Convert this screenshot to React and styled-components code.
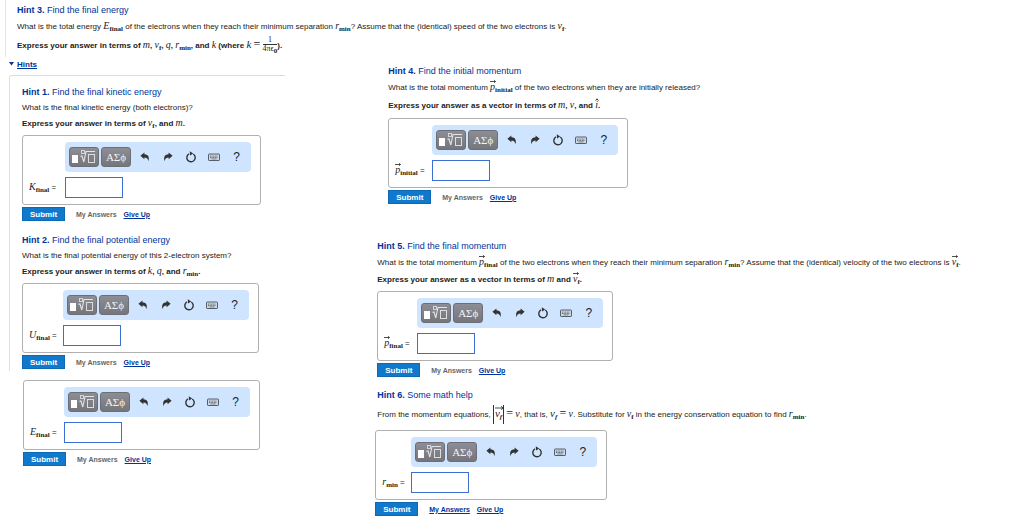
import React from "react";
import styled, { createGlobalStyle } from "styled-components";

const Undo = () => (
  <svg width="10" height="10" viewBox="0 0 10 10">
    <path d="M0.4 3.8 L4.4 0.4 V2.3 C7.8 2.4 9.8 4.6 8.4 9.2 C8 6.8 6.8 5.7 4.4 5.6 V7.2 Z" fill="#333" />
  </svg>
);

const Redo = () => (
  <svg width="10" height="10" viewBox="0 0 10 10">
    <path d="M9.6 3.8 L5.6 0.4 V2.3 C2.2 2.4 0.2 4.6 1.6 9.2 C2 6.8 3.2 5.7 5.6 5.6 V7.2 Z" fill="#333" />
  </svg>
);

const Reset = () => (
  <svg width="12" height="12" viewBox="0 0 12 12">
    <path d="M8.2 3 A4.2 4.2 0 1 1 4 2.9" fill="none" stroke="#333" strokeWidth="1.4" />
    <path d="M4.8 0.3 L8.2 2.4 L5 4.6 Z" fill="#333" />
  </svg>
);

const Keyboard = () => (
  <svg width="12" height="8" viewBox="0 0 12 8">
    <rect x="0.5" y="1" width="11" height="6.5" rx="0.6" fill="#cfd8e2" stroke="#555f6b" />
    <path d="M2 3.1h8M2 4.5h8" stroke="#555f6b" strokeWidth="0.9" strokeDasharray="1 0.6" />
    <path d="M3.4 5.9h5.2" stroke="#555f6b" strokeWidth="0.7" />
  </svg>
);

const Template = () => (
  <svg width="26" height="16" viewBox="0 0 26 16">
    <rect x="1" y="6" width="6" height="8" fill="#fff" />
    <rect x="10.5" y="1.5" width="3" height="3" fill="none" stroke="#ddd" strokeWidth="0.9" />
    <path d="M9.5 7.4 L11 7 L12.8 13 L15 2.5 H24" fill="none" stroke="#e4e4e4" strokeWidth="1.1" />
    <rect x="17.5" y="5.5" width="6" height="8" fill="none" stroke="#ddd" />
  </svg>
);

const VecArrow = () => (
  <svg width="6" height="3" viewBox="0 0 6 3">
    <path d="M0 1.5H5.4M4 0.3L5.5 1.5L4 2.7" fill="none" stroke="currentColor" strokeWidth="0.8" />
  </svg>
);

const Final = ({ s }) => (
  <>
    <Var>{s}</Var>
    <Sub>final</Sub>
  </>
);

const Vf = () => (
  <>
    <Var>v</Var>
    <Sub>f</Sub>
  </>
);

const Rmin = () => (
  <>
    <Var>r</Var>
    <Sub>min</Sub>
  </>
);

const Vec = ({ children }) => (
  <Over>
    <VecArrow />
    <Var>{children}</Var>
  </Over>
);

const Answer = ({ id, label, labelWidth, linked }) => (
  <form onSubmit={(e) => e.preventDefault()}>
    <Box>
      <Tools>
        <ToolButton type="button" aria-label="Templates">
          <Template />
        </ToolButton>
        <ToolButton type="button">ΑΣϕ</ToolButton>
        <IconButton type="button" aria-label="Undo">
          <Undo />
        </IconButton>
        <IconButton type="button" aria-label="Redo">
          <Redo />
        </IconButton>
        <IconButton type="button" aria-label="Reset">
          <Reset />
        </IconButton>
        <IconButton type="button" aria-label="Keyboard">
          <Keyboard />
        </IconButton>
        <IconButton type="button">?</IconButton>
      </Tools>
      <Label htmlFor={id} $width={labelWidth}>
        {label} =
      </Label>
      <Field id={id} type="text" />
    </Box>
    <Actions>
      <Submit type="submit">Submit</Submit>
      {linked ? <Link href="#answers">My Answers</Link> : <Muted>My Answers</Muted>}
      <Link href="#giveup">Give Up</Link>
    </Actions>
  </form>
);

const App = () => {
  return (
    <>
      <GlobalStyle />
      <Intro>
        <Title>
          <b>Hint 3.</b> Find the final energy
        </Title>
        <Line>
          What is the total energy <Final s="E" /> of the electrons when they reach their minimum separation{" "}
          <Rmin />? Assume that the (identical) speed of the two electrons is <Vf />.
        </Line>
        <Line $bold>
          Express your answer in terms of <Var>m</Var>, <Vf />, <Var>q</Var>, <Rmin />, and <Var>k</Var> (where{" "}
          <Var $big>k</Var> <Sign>=</Sign>{" "}
          <Fraction>
            <span>1</span>
            <Bottom>
              4πϵ<Sub>0</Sub>
            </Bottom>
          </Fraction>
          ).
        </Line>
      </Intro>
      <Columns>
        <div>
          <Toggle>
            <Caret width="5" height="4" viewBox="0 0 5 4">
              <path d="M0 0H5L2.5 3.6Z" fill="#003399" />
            </Caret>
            <HintsLink href="#hints">Hints</HintsLink>
          </Toggle>
          <Panel>
            <Hint>
              <Title>
                <b>Hint 1.</b> Find the final kinetic energy
              </Title>
              <Line $tight>What is the final kinetic energy (both electrons)?</Line>
              <Line $tight $bold>
                Express your answer in terms of <Vf />, and <Var>m</Var>.
              </Line>
              <Answer id="kfinal" label={<Final s="K" />} labelWidth={36} />
            </Hint>
            <Hint>
              <Title>
                <b>Hint 2.</b> Find the final potential energy
              </Title>
              <Line $tight>What is the final potential energy of this 2-electron system?</Line>
              <Line $tight $bold>
                Express your answer in terms of <Var>k</Var>, <Var>q</Var>, and <Rmin />.
              </Line>
              <Answer id="ufinal" label={<Final s="U" />} labelWidth={34} />
            </Hint>
          </Panel>
          <Total>
            <Answer id="efinal" label={<Final s="E" />} labelWidth={34} />
          </Total>
        </div>
        <Right>
          <Initial>
            <Title>
              <b>Hint 4.</b> Find the initial momentum
            </Title>
            <Line>
              What is the total momentum <Vec>p</Vec>
              <Sub>initial</Sub> of the two electrons when they are initially released?
            </Line>
            <Line $bold>
              Express your answer as a vector in terms of <Var>m</Var>, <Var>v</Var>, and{" "}
              <Over>
                <svg width="5" height="3" viewBox="0 0 5 3">
                  <path d="M0.6 2.6L2 0.8L3.4 2.6" fill="none" stroke="currentColor" strokeWidth="0.9" />
                </svg>
                <Var>i</Var>
              </Over>
              .
            </Line>
            <Answer
              id="pinitial"
              label={
                <>
                  <Vec>p</Vec>
                  <Sub>initial</Sub>
                </>
              }
              labelWidth={37}
            />
          </Initial>
          <Final5>
            <Title>
              <b>Hint 5.</b> Find the final momentum
            </Title>
            <Line>
              What is the total momentum <Vec>p</Vec>
              <Sub>final</Sub> of the two electrons when they reach their minimum separation <Rmin />? Assume that
              the (identical) velocity of the two electrons is <Vec>v</Vec>
              <Sub>f</Sub>.
            </Line>
            <Line $tight $bold>
              Express your answer as a vector in terms of <Var>m</Var> and <Vec>v</Vec>
              <Sub>f</Sub>.
            </Line>
            <Answer
              id="pfinal"
              label={
                <>
                  <Vec>p</Vec>
                  <Sub>final</Sub>
                </>
              }
              labelWidth={33}
            />
          </Final5>
          <Hint>
            <Title>
              <b>Hint 6.</b> Some math help
            </Title>
            <Line $tall>
              From the momentum equations,{" "}
              <Abs>
                <Over>
                  <svg width="9" height="4" viewBox="0 0 9 4">
                    <path d="M0 2H8M6 0.3L8.3 2L6 3.7" fill="none" stroke="currentColor" strokeWidth="0.8" />
                  </svg>
                  <Var $big>v</Var>
                  <Sub $italic>f</Sub>
                </Over>
              </Abs>{" "}
              <Sign>=</Sign> <Var>v</Var>, that is, <Var $big>v</Var>
              <Sub $italic>f</Sub> <Sign>=</Sign> <Var>v</Var>. Substitute for <Vf /> in the energy conservation
              equation to find <Rmin />.
            </Line>
            <Last>
              <Answer id="rmin" label={<Rmin />} labelWidth={29} linked />
            </Last>
          </Hint>
        </Right>
      </Columns>
    </>
  );
};

const GlobalStyle = createGlobalStyle`
  * {
    box-sizing: border-box;
  }
  body {
    margin: 0;
    background: #fff;
    color: #222;
    font-family: "Liberation Sans", Arial, sans-serif;
    font-size: 8px;
  }
  button, input {
    font-family: inherit;
    margin: 0;
  }
`;

const Intro = styled.header`
  margin-left: 5px;
  padding: 2px 0 2px 11px;
  border-left: 1px solid #e4e4e4;
`;

const Title = styled.h2`
  margin: 0;
  color: #003399;
  font-size: 9px;
  font-weight: normal;
  line-height: 16px;
`;

const Line = styled.p`
  margin: 0;
  line-height: ${(props) => (props.$tall ? "24px" : props.$tight ? "16px" : "18px")};
  font-weight: ${(props) => (props.$bold ? "bold" : "normal")};
  white-space: nowrap;
`;

const Columns = styled.main`
  display: grid;
  grid-template-columns: 7fr 12fr;
  align-items: start;
  & > * {
    min-width: 0;
  }
`;

const Toggle = styled.div`
  display: flex;
  align-items: center;
  gap: 3px;
  padding-left: 9px;
  height: 14px;
`;

const Caret = styled.svg`
  display: block;
`;

const HintsLink = styled.a`
  color: #003399;
  font-weight: bold;
`;

const Panel = styled.section`
  display: flex;
  flex-direction: column;
  gap: 11px;
  margin: 4px 92px 0 9px;
  padding: 8px 0 2px 12px;
  border-top: 1px solid #ddd;
  border-left: 1px solid #e0e0e0;
  border-top-left-radius: 3px;
`;

const Hint = styled.section`
  min-width: 0;
`;

const Total = styled.section`
  margin: 6px 0 0 23px;
`;

const Right = styled.div`
  padding-top: 6px;
`;

const Initial = styled.section`
  margin: 0 0 34px 11px;
`;

const Final5 = styled.section`
  margin-bottom: 10px;
`;

const Last = styled.div`
  margin-left: -2px;
`;

const Box = styled.div`
  display: inline-grid;
  grid-template-columns: auto auto;
  row-gap: 5px;
  align-items: center;
  margin-top: 3px;
  padding: 6px 9px 6px 6px;
  border: 1px solid #b0b0b0;
  border-radius: 3px;
  vertical-align: top;
`;

const Tools = styled.div`
  grid-column: 2;
  display: flex;
  align-items: center;
  height: 30px;
  width: 186px;
  padding-left: 4px;
  border-radius: 4px;
  background: #cfe5ff;
`;

const ToolButton = styled.button`
  display: flex;
  align-items: center;
  justify-content: center;
  width: 30px;
  height: 20px;
  margin-right: 2px;
  padding: 0;
  border: 1px solid #6e6e76;
  border-radius: 3px;
  background: linear-gradient(#8d8d95, #75757c);
  color: #f2f2f2;
  font-family: "Liberation Serif", serif;
  font-size: 11px;
  line-height: 1;
`;

const IconButton = styled.button`
  display: flex;
  align-items: center;
  justify-content: center;
  width: 23px;
  height: 20px;
  padding: 0;
  border: 0;
  background: none;
  color: #222;
  font-size: 12px;
`;

const Label = styled.label`
  width: ${(props) => props.$width}px;
  white-space: nowrap;
  line-height: 16px;
`;

const Field = styled.input`
  width: 58px;
  height: 21px;
  padding: 0 3px;
  border: 1px solid #3b6fd4;
  background: #fff;
  font-size: 8px;
`;

const Actions = styled.div`
  display: flex;
  align-items: center;
  gap: 7px;
  margin-top: 2px;
`;

const Submit = styled.button`
  width: 43px;
  height: 14px;
  margin-right: 4px;
  padding: 0;
  border: 1px solid #0c69b5;
  background: #1179cc;
  color: #fff;
  font-size: 8px;
  font-weight: bold;
  line-height: 11px;
`;

const Muted = styled.span`
  color: #666;
  font-size: 7px;
  font-weight: bold;
`;

const Link = styled.a`
  color: #003399;
  font-size: 7px;
  font-weight: bold;
`;

const Var = styled.i`
  font-family: "Liberation Serif", serif;
  font-size: ${(props) => (props.$big ? "11px" : "10px")};
  font-weight: normal;
  line-height: 1;
`;

const Sub = styled.span`
  font-family: "Liberation Serif", serif;
  font-size: 7px;
  font-style: ${(props) => (props.$italic ? "italic" : "normal")};
  font-weight: bold;
  line-height: 1;
  vertical-align: -2px;
`;

const Sign = styled.span`
  font-family: "Liberation Serif", serif;
  font-size: 12px;
  font-weight: normal;
  line-height: 1;
`;

const Fraction = styled.span`
  display: inline-flex;
  flex-direction: column;
  vertical-align: middle;
  text-align: center;
  font-family: "Liberation Serif", serif;
  font-size: 8px;
  font-weight: normal;
  line-height: 8px;
`;

const Bottom = styled.span`
  border-top: 1px solid #333;
`;

const Over = styled.span`
  position: relative;
  display: inline-block;
  line-height: 1;
  & > svg {
    position: absolute;
    left: 0;
    top: -2px;
  }
`;

const Abs = styled.span`
  display: inline-block;
  padding: 3px 1px;
  border-left: 1px solid #333;
  border-right: 1px solid #333;
  line-height: 12px;
  vertical-align: middle;
`;

export default App;
